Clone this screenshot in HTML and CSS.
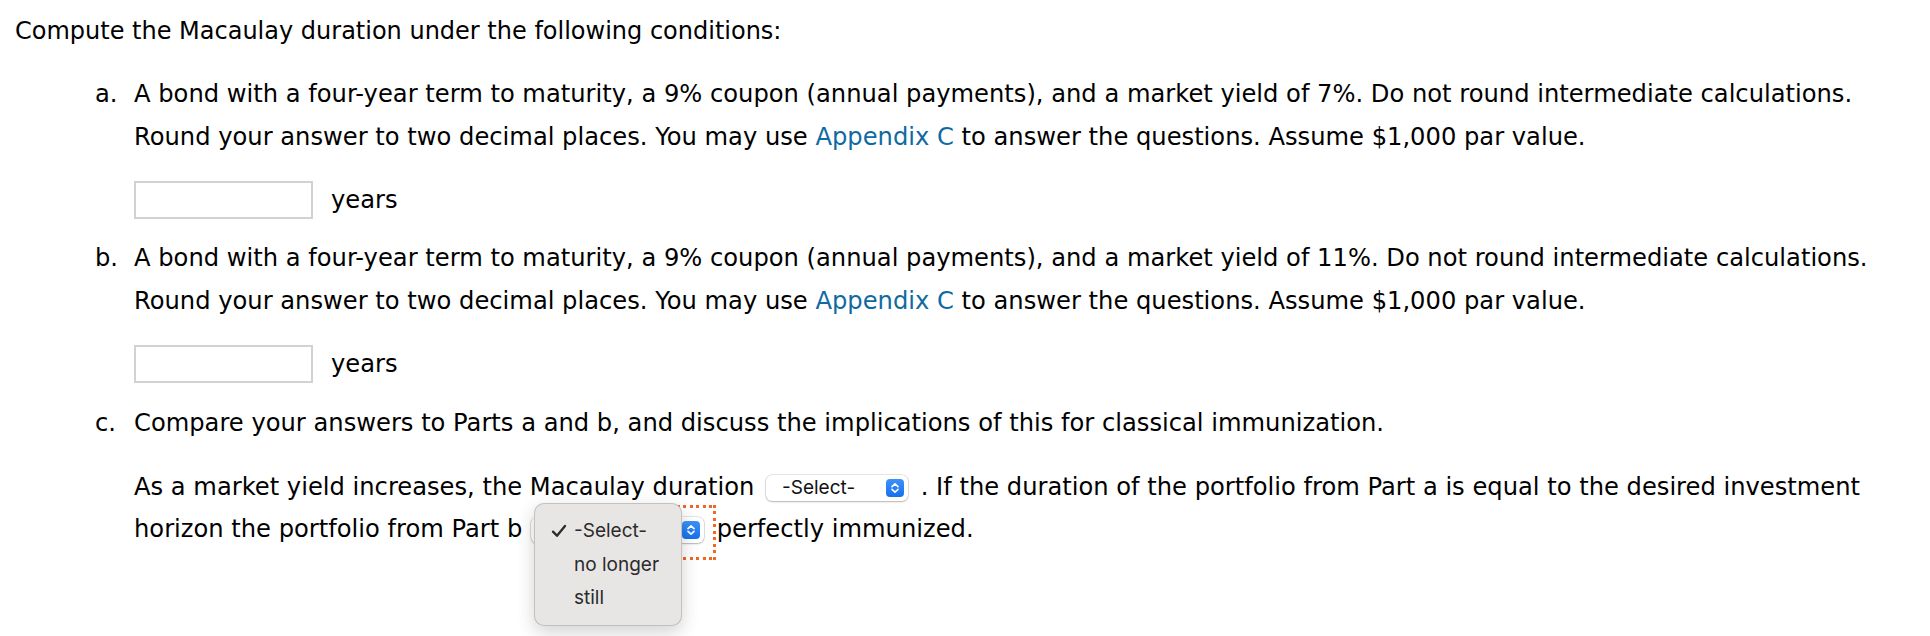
FILE: index.html
```html
<!DOCTYPE html>
<html lang="en">
<head>
<meta charset="utf-8">
<title>Macaulay duration</title>
<link rel="stylesheet" href="styles.css">
</head>
<body>
<div class="page">
  <p class="prompt">Compute the Macaulay duration under the following conditions:</p>
  <ol class="parts">
    <li class="part">
      <span class="part-label">a.</span>
      <div class="part-body">
        <p class="part-text">A bond with a four-year term to maturity, a 9% coupon (annual payments), and a market yield of 7%. Do not round intermediate calculations. Round your answer to two decimal places. You may use <a class="link" href="#">Appendix C</a> to answer the questions. Assume $1,000 par value.</p>
        <div class="answer-row"><input class="answer-input" type="text"><span class="unit">years</span></div>
      </div>
    </li>
    <li class="part">
      <span class="part-label">b.</span>
      <div class="part-body">
        <p class="part-text">A bond with a four-year term to maturity, a 9% coupon (annual payments), and a market yield of 11%. Do not round intermediate calculations. Round your answer to two decimal places. You may use <a class="link" href="#">Appendix C</a> to answer the questions. Assume $1,000 par value.</p>
        <div class="answer-row"><input class="answer-input" type="text"><span class="unit">years</span></div>
      </div>
    </li>
    <li class="part part-c">
      <span class="part-label">c.</span>
      <div class="part-body">
        <p class="part-text">Compare your answers to Parts a and b, and discuss the implications of this for classical immunization.</p>
        <p class="part-text fill-text">As a market yield increases, the Macaulay duration <span class="select select-first"><span class="select-value">-Select-</span><span class="select-arrow"><svg viewBox="0 0 18 18" width="18" height="18"><path d="M6 7.6 L9 4.8 L12 7.6 M6 10.4 L9 13.2 L12 10.4" fill="none" stroke="#fff" stroke-width="1.7" stroke-linecap="round" stroke-linejoin="round"/></svg></span></span> . If the duration of the portfolio from Part a is equal to the desired investment horizon the portfolio from Part b <span class="select-focus"><span class="select select-second"><span class="select-value">-Select-</span><span class="select-arrow"><svg viewBox="0 0 18 18" width="18" height="18"><path d="M6 7.6 L9 4.8 L12 7.6 M6 10.4 L9 13.2 L12 10.4" fill="none" stroke="#fff" stroke-width="1.7" stroke-linecap="round" stroke-linejoin="round"/></svg></span></span><span class="focus-ring"></span><span class="menu"><span class="menu-item menu-item-checked"><svg class="menu-check" viewBox="0 0 16 16" width="16" height="16"><path d="M2 8.6 L6 12.8 L14 3" fill="none" stroke="#2b2b2b" stroke-width="2.3" stroke-linecap="round" stroke-linejoin="round"/></svg>-Select-</span><span class="menu-item">no longer</span><span class="menu-item">still</span></span></span> perfectly immunized.</p>
      </div>
    </li>
  </ol>
</div>
</body>
</html>
```

FILE: styles.css
```css
html, body {
  margin: 0;
  padding: 0;
  height: 100%;
  background: #fff;
}

body {
  font-family: "DejaVu Sans", Verdana, sans-serif;
  color: #000;
}

.page {
  box-sizing: border-box;
  min-height: 100%;
  padding: 0 15px 0 15px;
}

.prompt {
  margin: 0;
  padding-top: 9.5px;
  font-size: 24px;
  line-height: 43px;
}

.parts {
  list-style: none;
  margin: 20px 0 0;
  padding: 0 0 0 80px;
}

.part {
  display: flex;
  font-size: 24.2px;
}

.part-label {
  flex: 0 0 39px;
  line-height: 43px;
}

.part-body {
  flex: 1;
  min-width: 0;
}

.part-text {
  margin: 0;
  line-height: 43px;
}

.link {
  color: #0f6aa2;
  text-decoration: none;
}

.answer-row {
  display: flex;
  align-items: center;
  height: 38px;
  margin: 22px 0 18.5px;
}

.answer-input {
  box-sizing: border-box;
  width: 179px;
  height: 38px;
  margin: 0;
  padding: 0 6px;
  border: 2px solid #d2d2d2;
  border-radius: 0;
  background: #fff;
  font: inherit;
}

.unit {
  margin-left: 18px;
}

.fill-text {
  margin-top: 21.5px;
  line-height: 42px;
}

.select {
  box-sizing: border-box;
  display: inline-flex;
  align-items: center;
  justify-content: space-between;
  height: 26px;
  padding: 0 4px 0 16px;
  vertical-align: middle;
  background: #fff;
  border-radius: 6px;
  box-shadow: 0 0 0 0.5px rgba(0, 0, 0, 0.18), 0 1px 2px rgba(0, 0, 0, 0.22);
  font-family: Inter, "Liberation Sans", sans-serif;
  font-size: 19px;
  line-height: 26px;
  color: #111;
}

.select-first {
  width: 142px;
  margin: 0 5px 0 4px;
}

.select-second {
  width: 173px;
}

.select-arrow {
  display: flex;
  width: 18px;
  height: 18px;
  border-radius: 4px;
  background: linear-gradient(#3d92f8, #1670ef);
}

.select-focus {
  position: relative;
  display: inline-block;
  margin: 0 5px 0 1px;
  vertical-align: middle;
  line-height: 0;
}

.focus-ring {
  position: absolute;
  left: 9px;
  right: -12px;
  top: -12px;
  bottom: -17px;
  background:
    repeating-linear-gradient(90deg, #f26522 0 3px, transparent 3px 6.5px) top left / 100% 3px no-repeat,
    repeating-linear-gradient(90deg, #f26522 0 3px, transparent 3px 6.5px) bottom left / 100% 3px no-repeat,
    repeating-linear-gradient(180deg, #f26522 0 3px, transparent 3px 6.5px) top left / 3px 100% no-repeat,
    repeating-linear-gradient(180deg, #f26522 0 3px, transparent 3px 6.5px) top right / 3px 100% no-repeat;
}

.menu {
  position: absolute;
  left: 3px;
  top: -14px;
  z-index: 2;
  box-sizing: border-box;
  display: flex;
  flex-direction: column;
  width: 148px;
  padding: 10px 0;
  background: #e8e6e4;
  border: 1px solid rgba(0, 0, 0, 0.16);
  border-radius: 10px;
  box-shadow: 0 6px 18px rgba(0, 0, 0, 0.18);
  font-family: Inter, "Liberation Sans", sans-serif;
  font-size: 19px;
  color: #2b2b2b;
}

.menu-item {
  position: relative;
  display: block;
  height: 33.5px;
  line-height: 33.5px;
  padding-left: 39px;
  white-space: nowrap;
}

.menu-check {
  position: absolute;
  left: 16px;
  top: 9px;
}
```
